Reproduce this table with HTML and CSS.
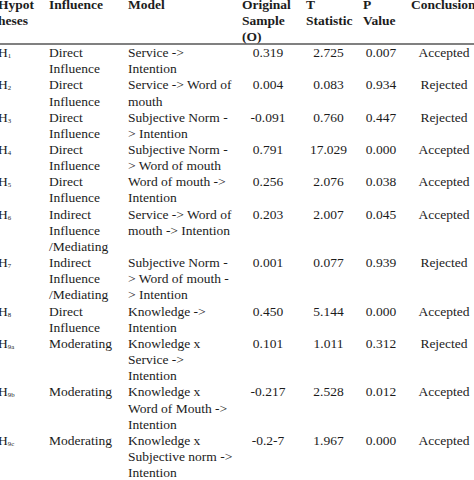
FILE: index.html
```html
<!DOCTYPE html>
<html>
<head>
<meta charset="utf-8">
<link rel="stylesheet" href="styles.css">
</head>
<body>
<table class="results">
<colgroup>
<col class="c-h"><col class="c-inf"><col class="c-model"><col class="c-orig"><col class="c-t"><col class="c-p"><col class="c-conc">
</colgroup>
<thead>
<tr>
<th><div class="hd">Hypot<br>heses</div></th>
<th><div class="hd">Influence</div></th>
<th><div class="hd">Model</div></th>
<th><div class="hd">Original<br>Sample<br>(O)</div></th>
<th><div class="hd">T<br>Statistic</div></th>
<th><div class="hd">P<br>Value</div></th>
<th><div class="hd">Conclusion</div></th>
</tr>
</thead>
<tbody>
<tr><td>H<sub>1</sub></td><td>Direct<br>Influence</td><td>Service -&gt;<br>Intention</td><td class="num">0.319</td><td class="num">2.725</td><td class="num">0.007</td><td class="num">Accepted</td></tr>
<tr><td>H<sub>2</sub></td><td>Direct<br>Influence</td><td>Service -&gt; Word of<br>mouth</td><td class="num">0.004</td><td class="num">0.083</td><td class="num">0.934</td><td class="num">Rejected</td></tr>
<tr><td>H<sub>3</sub></td><td>Direct<br>Influence</td><td>Subjective Norm -<br>&gt; Intention</td><td class="num">-0.091</td><td class="num">0.760</td><td class="num">0.447</td><td class="num">Rejected</td></tr>
<tr><td>H<sub>4</sub></td><td>Direct<br>Influence</td><td>Subjective Norm -<br>&gt; Word of mouth</td><td class="num">0.791</td><td class="num">17.029</td><td class="num">0.000</td><td class="num">Accepted</td></tr>
<tr><td>H<sub>5</sub></td><td>Direct<br>Influence</td><td>Word of mouth -&gt;<br>Intention</td><td class="num">0.256</td><td class="num">2.076</td><td class="num">0.038</td><td class="num">Accepted</td></tr>
<tr><td>H<sub>6</sub></td><td>Indirect<br>Influence<br>/Mediating</td><td>Service -&gt; Word of<br>mouth -&gt; Intention</td><td class="num">0.203</td><td class="num">2.007</td><td class="num">0.045</td><td class="num">Accepted</td></tr>
<tr><td>H<sub>7</sub></td><td>Indirect<br>Influence<br>/Mediating</td><td>Subjective Norm -<br>&gt; Word of mouth -<br>&gt; Intention</td><td class="num">0.001</td><td class="num">0.077</td><td class="num">0.939</td><td class="num">Rejected</td></tr>
<tr><td>H<sub>8</sub></td><td>Direct<br>Influence</td><td>Knowledge -&gt;<br>Intention</td><td class="num">0.450</td><td class="num">5.144</td><td class="num">0.000</td><td class="num">Accepted</td></tr>
<tr><td>H<sub>9a</sub></td><td>Moderating</td><td>Knowledge x<br>Service -&gt;<br>Intention</td><td class="num">0.101</td><td class="num">1.011</td><td class="num">0.312</td><td class="num">Rejected</td></tr>
<tr><td>H<sub>9b</sub></td><td>Moderating</td><td>Knowledge x<br>Word of Mouth -&gt;<br>Intention</td><td class="num">-0.217</td><td class="num">2.528</td><td class="num">0.012</td><td class="num">Accepted</td></tr>
<tr><td>H<sub>9c</sub></td><td>Moderating</td><td>Knowledge x<br>Subjective norm -&gt;<br>Intention</td><td class="num">-0.2-7</td><td class="num">1.967</td><td class="num">0.000</td><td class="num">Accepted</td></tr>
</tbody>
</table>
</body>
</html>
```
FILE: styles.css
```css
html, body {
  margin: 0;
  padding: 0;
  background: #ffffff;
  overflow: hidden;
}

body {
  font-family: "Liberation Serif", "Times New Roman", serif;
  font-size: 13.5px;
  color: #1c1c1c;
}

.results {
  border-collapse: collapse;
  table-layout: fixed;
  width: 490px;
  margin: -3.4px 0 0 -2px;
  line-height: 16.15px;
}

.c-h { width: 51px; }
.c-inf { width: 79px; }
.c-model { width: 113px; }
.c-orig { width: 64px; }
.c-t { width: 57px; }
.c-p { width: 48px; }
.c-conc { width: 78px; }

.results th,
.results td {
  padding: 0;
  vertical-align: top;
  text-align: left;
  white-space: nowrap;
}

.results th {
  font-weight: bold;
  border-bottom: 2px solid #808080;
}

.results th .hd {
  margin-bottom: -2px;
}

.results th:nth-child(n+4) {
  padding-left: 1px;
}

.results td.num {
  text-align: center;
  padding-right: 10px;
}

.results sub {
  font-size: 0.5em;
  vertical-align: baseline;
  position: relative;
  top: 1px;
  line-height: 0;
}
```
